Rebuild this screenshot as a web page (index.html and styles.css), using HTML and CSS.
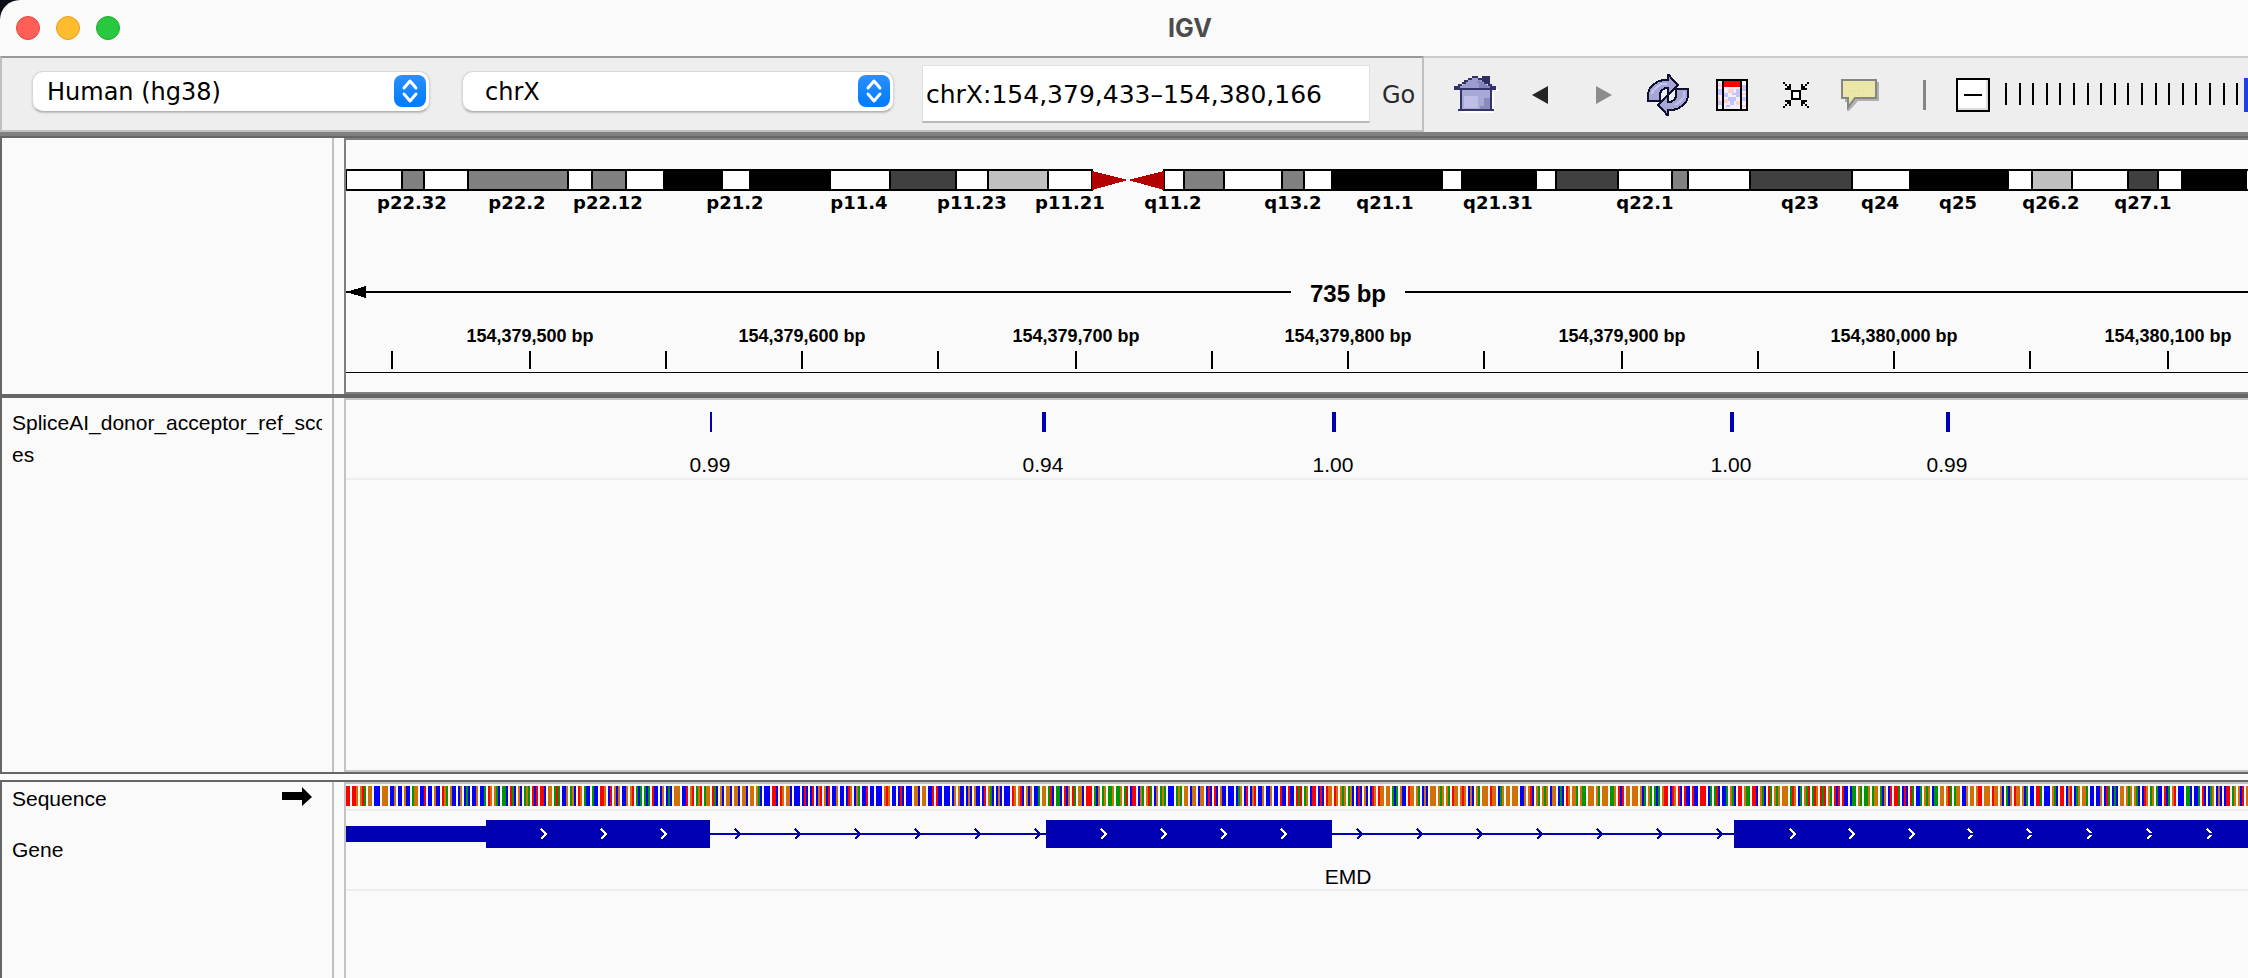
FILE: index.html
```html
<!DOCTYPE html>
<html lang="en">
<head>
<meta charset="utf-8">
<title>IGV</title>
<link rel="stylesheet" href="styles.css">
</head>
<body>
<div class="window">
  <header class="titlebar">
    <div class="lights">
      <button class="light light-close" aria-label="Close"></button>
      <button class="light light-min" aria-label="Minimize"></button>
      <button class="light light-max" aria-label="Zoom"></button>
    </div>
    <h1 class="title">IGV</h1>
  </header>

  <div class="toolbar">
    <form class="locus-bar">
      <div class="picker picker-genome">
        <select class="picker-select" aria-label="Genome"><option>Human (hg38)</option></select>
        <svg class="picker-knob" width="32" height="32" viewBox="0 0 32 32" aria-hidden="true"><path d="M10 13l6-7 6 7M10 19l6 7 6-7"/></svg>
      </div>
      <div class="picker picker-chrom">
        <select class="picker-select" aria-label="Chromosome"><option>chrX</option></select>
        <svg class="picker-knob" width="32" height="32" viewBox="0 0 32 32" aria-hidden="true"><path d="M10 13l6-7 6 7M10 19l6 7 6-7"/></svg>
      </div>
      <input class="locus" type="text" aria-label="Locus" value="chrX:154,379,433–154,380,166">
      <button class="go" type="button">Go</button>
    </form>
    <div class="tools">
      <button class="tool" aria-label="Home">
        <svg width="44" height="38" viewBox="0 0 44 38" shape-rendering="crispEdges">
          <path fill="#fff" d="M6 35h34v2H6zM40 13h4v2h-4zM38 16h2v19h-2z"/>
          <path fill="#9c9cce" d="M18 2h6l4 2 4 4 4 2 6 4H2l4-4 4-2 4-4z"/>
          <path fill="#8484b8" d="M24 4l6 4 6 3 4 3H26z"/>
          <path fill="#2e2e63" d="M28 0h8v10h-2V8h-4V6h-2z"/>
          <path fill="none" stroke="#33336b" stroke-width="2" d="M0 11h6M4 9h4M8 7h4M10 5h4M14 3h4M18 1h6M24 3h4M28 5h2M30 7h4M34 9h4M36 11h6"/>
          <path fill="#a9a9d8" d="M8 14h28v20H8z"/>
          <path fill="#bebee6" d="M10 20h14v12H10z"/>
          <path fill="#8a8abc" d="M30 22h6v12H26v-4h4z"/>
          <path fill="#33336b" d="M0 12h42v2H0zM6 14h2v20H6zM36 14h2v20h-2zM4 33h36v2H4z"/>
        </svg>
      </button>
      <button class="tool" aria-label="Back"><svg width="16" height="18" viewBox="0 0 16 18"><path fill="#252525" d="M16 0v18L0 9z"/></svg></button>
      <button class="tool" aria-label="Forward"><svg width="16" height="18" viewBox="0 0 16 18"><path fill="#8c8c8c" d="M0 0v18l16-9z"/></svg></button>
      <button class="tool" aria-label="Refresh">
        <svg width="42" height="42" viewBox="0 0 42 42" shape-rendering="crispEdges">
          <path fill="#a5a5d6" stroke="#101030" stroke-width="2" d="M1 27V19l2-5 4-4 5-3 5-1h4V1h1l3 4 3 3 3 3-9 9h-1v-6h-3l-4 3-1 3v7z"/>
          <path fill="#c4c4ea" d="M4 18l4-5 6-4h6v2h-5l-6 4-3 5H4z"/>
          <path fill="#a5a5d6" stroke="#101030" stroke-width="2" d="M41 15v8l-2 5-4 4-5 3-5 1h-4v5h-1l-3-4-3-3-3-3 9-9h1v6h3l4-3 1-3v-7z"/>
          <path fill="#bcbce4" d="M36 17h2v6l-3 5-5 3h-4l6-4 4-5z"/>
        </svg>
      </button>
      <button class="tool" aria-label="Define region">
        <svg width="32" height="32" viewBox="0 0 32 32" shape-rendering="crispEdges">
          <path fill="#f4f0fb" d="M0 0h32v32H0z"/>
          <path fill="#c3c3ff" d="M2 10h4v6H2zM2 22h4v4H2zM8 14h4v4H8zM12 18h8v4h-8zM20 10h4v8h-4zM14 22h4v4h-4zM10 26h4v2h-4zM26 6h4v6h-4zM26 18h4v4h-4zM16 14h6v2h-6z"/>
          <path fill="#ffcfcf" d="M2 4h4v4H2zM12 10h6v4h-6zM8 20h4v4H8zM20 22h4v4h-4zM26 14h4v2h-4zM2 18h2v4H2zM26 26h4v2h-4z"/>
          <path fill="#f00" d="M8 2h16v6H8z"/>
          <path fill="none" stroke="#000" stroke-width="2" d="M1 1h30v30H1zM7 1v30M25 1v30"/>
        </svg>
      </button>
      <button class="tool" aria-label="Fit data to window">
        <svg width="26" height="26" viewBox="0 0 26 26" shape-rendering="crispEdges">
          <path fill="#fff" stroke="#000" stroke-width="2" d="M9 9h8v8H9z"/>
          <path id="corner" d="M0 0h2v2H0zM2 2h2v2H2zM4 4h4v2H4zM6 2h2v2H6zM2 6h6v2H2z"/>
          <path d="M26 0h-2v2h2zM24 2h-2v2h2zM22 4h-4v2h4zM20 2h-2v2h2zM24 6h-6v2h6z"/>
          <path d="M0 26h2v-2H0zM2 24h2v-2H2zM4 22h4v-2H4zM6 24h2v-2H6zM2 20h6v-2H2z"/>
          <path d="M26 26h-2v-2h2zM24 24h-2v-2h2zM22 22h-4v-2h4zM20 24h-2v-2h2zM24 20h-6v-2h6z"/>
        </svg>
      </button>
      <button class="tool" aria-label="Show popup text">
        <svg width="38" height="32" viewBox="0 0 38 32">
          <path fill="#b0b0b0" d="M4 3h34v19H17l-9 10H6v-9H4z"/>
          <path fill="#ebe7a9" stroke="#858585" stroke-width="2" d="M1 1h34v18H14l-7 9v-9H1z"/>
          <path stroke="#d9d9b8" stroke-width="1" stroke-dasharray="2 3" d="M7 12h20"/>
        </svg>
      </button>
      <span class="divider"></span>
      <button class="zoom-out" aria-label="Zoom out"></button>
      <svg class="zoom-scale" id="zoom-scale" height="34" aria-hidden="true"></svg>
    </div>
  </div>

  <main class="panels">
    <section class="panel panel-header">
      <div class="names"></div>
      <div class="tracks"><svg id="ruler" class="canvas canvas-ruler"></svg></div>
    </section>
    <section class="panel panel-data">
      <div class="names"><p class="name name-wrap">SpliceAI_donor_acceptor_ref_sco<br>es</p></div>
      <div class="tracks"><svg id="splice" class="canvas canvas-splice"></svg></div>
    </section>
    <section class="panel panel-feature">
      <div class="names">
        <div class="name name-sequence">Sequence
          <svg width="30" height="20" viewBox="0 0 30 20" aria-hidden="true"><path d="M0 5h20V0l10 10-10 9v-6H0z"/></svg>
        </div>
        <p class="name name-gene">Gene</p>
      </div>
      <div class="tracks">
        <svg id="sequence" class="canvas canvas-sequence"></svg>
        <svg id="gene" class="canvas canvas-gene"></svg>
      </div>
    </section>
  </main>
</div>
<script src="tracks.js"></script>
</body>
</html>
```

FILE: styles.css
```css
* { box-sizing: border-box; }

body {
  margin: 0;
  background: #0c0e18;
  font-family: "Liberation Sans", Arial, sans-serif;
  color: #000;
}

.window {
  display: flex;
  flex-direction: column;
  min-height: 100vh;
  overflow: hidden;
  background: #fafafa;
  border-top-left-radius: 20px;
}

button {
  margin: 0;
  padding: 0;
  border: 0;
  background: none;
}

/* Title bar */
.titlebar {
  display: flex;
  align-items: center;
  height: 56px;
  padding-left: 16px;
}
.lights { display: flex; gap: 16px; }
.light {
  width: 24px;
  height: 24px;
  border: 1px solid;
  border-radius: 50%;
}
.light-close { background: #ff5f57; border-color: #e2463f; }
.light-min { background: #febc2e; border-color: #e0a028; }
.light-max { background: #28c840; border-color: #1dab2f; }
.title {
  margin: 0 0 0 1048px;
  font: bold 25px/32px Inter, sans-serif;
  color: #4b4b4b;
}

/* Toolbar */
.toolbar {
  display: flex;
  height: 80px;
  background: #eee;
  border-bottom: 4px solid #808080;
}
.locus-bar {
  display: flex;
  flex: none;
  align-items: flex-start;
  width: 1424px;
  padding: 7px 0 0 30px;
  border: 2px solid #c0c0c0;
  border-top-color: #999;
}
.picker {
  position: relative;
  height: 41px;
  margin-top: 6px;
}
.picker-genome { width: 398px; margin-right: 32px; }
.picker-chrom { width: 432px; margin-right: 28px; }
.picker-select {
  width: 100%;
  height: 100%;
  padding: 1px 40px 0 14px;
  appearance: none;
  border: 1px solid #d8d8d8;
  border-bottom-color: #b4b4b4;
  border-radius: 11px;
  background: #fff;
  box-shadow: 0 1px 2px #0003;
  color: #000;
  font: 24px/38px "DejaVu Sans", sans-serif;
}
.picker-chrom .picker-select { padding-left: 22px; }
.picker-knob {
  position: absolute;
  top: 4px;
  right: 4px;
  border-radius: 8px;
  background: linear-gradient(#2a90ff, #007aff);
  pointer-events: none;
}
.picker-knob path {
  fill: none;
  stroke: #fff;
  stroke-width: 3;
  stroke-linecap: round;
  stroke-linejoin: round;
}
.locus {
  width: 448px;
  height: 58px;
  padding: 2px 3px 0;
  border: 1px solid #e0e0e0;
  border-bottom: 2px solid #b8b8b8;
  background: #fff;
  color: #000;
  font: 25px/40px "DejaVu Sans", sans-serif;
}
.go {
  margin: 12px 0 0 12px;
  color: #2a2a2a;
  font: 24px/36px "DejaVu Sans", sans-serif;
}
.tools {
  display: flex;
  flex: 1;
  align-items: center;
  min-width: 0;
  padding-left: 20px;
  overflow: hidden;
  border-top: 2px solid #ccc;
}
.tool {
  display: flex;
  flex: none;
  align-items: center;
  justify-content: center;
  width: 64px;
  height: 48px;
}
.divider {
  flex: none;
  width: 3px;
  height: 30px;
  margin: 0 30px 0 31px;
  background: #858585;
}
.zoom-out {
  display: flex;
  flex: none;
  align-items: center;
  justify-content: center;
  width: 34px;
  height: 34px;
  border: 2px solid #000;
  background: #fff;
  box-shadow: inset -2px -2px #ddd;
}
.zoom-out::before {
  content: "";
  width: 18px;
  height: 2px;
  background: #000;
}
.zoom-scale {
  flex: 1;
  min-width: 0;
  margin-left: 15px;
}

/* Panels */
.panels {
  display: flex;
  flex: 1;
  flex-direction: column;
  border-top: 2px solid #666;
}
.panel {
  display: grid;
  grid-template-columns: 332px minmax(0, 1fr);
  column-gap: 10px;
  border-left: 2px solid #666;
}
.names {
  border-right: 2px solid #c0c0c0;
}
.tracks {
  border: 2px solid #c4c4c4;
  border-right: 0;
  overflow: hidden;
}
.panel-header .tracks { border-color: #808080; }
.panel-header { height: 256px; }
.panel-data {
  height: 380px;
  border-top: 4px solid #666;
  border-bottom: 2px solid #666;
}
.panel-feature {
  flex: 1;
  margin-top: 6px;
  border-top: 2px solid #666;
}
.panel-feature .tracks { border-bottom: 0; }

.name {
  margin: 0;
  padding: 0 10px;
  font-size: 21px;
  line-height: 32px;
}
.name-wrap {
  width: 320px;
  height: 80px;
  padding: 9px 0 0 10px;
  overflow: hidden;
  white-space: nowrap;
}
.name-sequence {
  display: flex;
  justify-content: space-between;
  height: 52px;
  padding: 1px 20px 0 10px;
}
.name-sequence svg { margin-top: 4px; }

.canvas {
  display: block;
  width: 100%;
  shape-rendering: crispEdges;
}
.canvas-ruler { height: 252px; }
.canvas-splice { height: 80px; border-bottom: 2px solid #eee; }
.canvas-sequence { height: 27px; border-bottom: 2px solid #eee; }
.canvas-gene { height: 80px; border-bottom: 2px solid #eee; }

.canvas text { text-anchor: middle; }
.band-label { font: bold 18px "DejaVu Sans", sans-serif; }
.span-label { font: bold 24px "Liberation Sans", Arial, sans-serif; }
.tick-label { font: bold 18px "Liberation Sans", Arial, sans-serif; }
.feature-label { font: 21px "Liberation Sans", Arial, sans-serif; }
```

FILE: tracks.js
```js
const NS = 'http://www.w3.org/2000/svg';
const BLUE = '#0000b2';

// Left edge of the track area; feature positions are given in window pixels.
const ORIGIN = 346;

function add(svg, tag, attrs, text) {
  const el = document.createElementNS(NS, tag);
  for (const key in attrs) el.setAttribute(key, attrs[key]);
  if (text) el.textContent = text;
  svg.appendChild(el);
}
function rect(svg, x, y, width, height, fill) {
  add(svg, 'rect', { x, y, width, height, fill });
}
function label(svg, x, y, text, cls) {
  add(svg, 'text', { x: x - ORIGIN, y, class: cls }, text);
}

// Zoom slider
const scale = document.getElementById('zoom-scale');
for (let i = 0; i < 18; i++) rect(scale, Math.round(i * 13.6), 5, 2, 22, '#000');
rect(scale, 239, 0, 14, 34, '#1f3fe0');

// Ideogram
const ruler = document.getElementById('ruler');
const W = '#fff', G1 = '#c0c0c0', G2 = '#808080', G3 = '#404040', K = '#000';
const arms = [
  [[346, W], [402, G2], [424, W], [468, G2], [568, W], [592, G2], [626, W], [664, K], [722, W],
   [750, K], [830, W], [890, G3], [956, W], [988, G1], [1048, W], [1092]],
  [[1164, W], [1184, G2], [1224, W], [1282, G2], [1304, W], [1332, K], [1442, W], [1462, K],
   [1536, W], [1556, G3], [1618, W], [1672, G2], [1688, W], [1750, G3], [1852, W], [1910, K],
   [2008, W], [2032, G1], [2072, W], [2128, G3], [2158, W], [2182, K], [2246, W], [2300]]
];
for (const arm of arms) {
  for (let i = 0; i < arm.length - 1; i++) {
    const x = arm[i][0] - ORIGIN;
    add(ruler, 'rect', {
      x, y: 30, width: arm[i + 1][0] - arm[i][0], height: 20,
      fill: arm[i][1], stroke: '#000', 'stroke-width': 2
    });
  }
}
add(ruler, 'path', { d: 'M746 31l36 9-36 10zM818 31l-36 9 36 10z', fill: '#b20000' });

[[412, 'p22.32'], [517, 'p22.2'], [608, 'p22.12'], [735, 'p21.2'], [859, 'p11.4'],
 [972, 'p11.23'], [1070, 'p11.21'], [1173, 'q11.2'], [1293, 'q13.2'], [1385, 'q21.1'],
 [1498, 'q21.31'], [1645, 'q22.1'], [1800, 'q23'], [1880, 'q24'], [1958, 'q25'],
 [2051, 'q26.2'], [2143, 'q27.1']
].forEach(([x, name]) => label(ruler, x, 69, name, 'band-label'));

// Ruler
rect(ruler, 0, 151, 945, 2, '#000');
rect(ruler, 1059, 151, 4000, 2, '#000');
add(ruler, 'path', { d: 'M0 152l20-6v12z' });
label(ruler, 1348, 162, '735 bp', 'span-label');
[392, 530, 666, 802, 938, 1076, 1212, 1348, 1484, 1622, 1758, 1894, 2030, 2168]
  .forEach(x => rect(ruler, x - ORIGIN - 1, 211, 2, 18, '#000'));
[[530, '154,379,500 bp'], [802, '154,379,600 bp'], [1076, '154,379,700 bp'],
 [1348, '154,379,800 bp'], [1622, '154,379,900 bp'], [1894, '154,380,000 bp'],
 [2168, '154,380,100 bp']].forEach(([x, t]) => label(ruler, x, 202, t, 'tick-label'));
rect(ruler, 0, 232, 5000, 1, '#000');

// Splice site scores
const splice = document.getElementById('splice');
[[711, '0.99', 2], [1044, '0.94', 4], [1334, '1.00', 4], [1732, '1.00', 4], [1948, '0.99', 4]]
  .forEach(([x, score, w]) => {
    rect(splice, x - ORIGIN - w / 2, 12, w, 20, BLUE);
    label(splice, x - 1, 72, score, 'feature-label');
  });

// Reference sequence
const bases = `TTTTGGTAGGCCCGGGCCGCCGCCAGGCCTCCGCCTGAGCCCGCACCCGCC
  ATGGACAACTACGCAGATCTTTCGGATACCGAGCTGACCACCTTGCTGCGCCGGTACAACATCCCGCACGGGCCTGTAGTAG
  GTACGCGGCGGCGGCGGGACCCCTTCTGGGCCCCCTCCTCGTGCTCCGCCCTGCGACCTCCCCCGTGCCCTCCCCG
  GCGGCCTTCCCCCCGGCCCGCGCCCTGACCGCCCCTGGTCGCGCCAG
  GATCAACTCGTAGGCTTTACGAGAAGAAGATCTTCGAGTACGAGACCCAGAGGCGGCGGCTCTCGCCCCCCAGCTCGTCCGCCGCCTCCTCCTATAGCTTCTCTG
  GTGGAGAGCCTCGCCTGTGGGGACAGCCTGGGACGCGGGGAGGATGGGTGCGCGAGGGTGGCAGGGGGGCCGGTCGAG
  AGCGGCACTGGGAGAAGGGGAGGGAAGTCTGGGGGGCAGAACAGTTCTGTCTCCTCCTTTCAATCCCAG
  ACTTGAATTCGACTAGAGGGGATGCAGATATGTATGATCTTCCCAAGAAAGAGGACGCTTTACTCTACCAGAGCAAGG
  GTAAGGCCGGGGTTGGGTGGGCACGTGGGCACCTTACCCGACTTCGTCAGGGACCCCGCTACACGGGAGGACCTGAGACCTCAGTCCCAACCCATCCAGCGCCTTAGGCTGACCTGA`
  .replace(/\s+/g, '');
const BASE_COLORS = { A: '#009600', C: '#0000ff', G: '#d17105', T: '#ff0000' };
const sequence = document.getElementById('sequence');
[...bases].forEach((base, i) => {
  rect(sequence, 2 * Math.floor(i * 1.3646 + 0.36), 2, 2, 20, BASE_COLORS[base]);
});

// Gene model
const gene = document.getElementById('gene');
rect(gene, 0, 22, 1400, 2, BLUE);
rect(gene, 0, 15, 140, 16, BLUE);
[[486, 710], [1046, 1332], [1734, 3000]]
  .forEach(([a, b]) => rect(gene, a - ORIGIN, 9, b - a, 28, BLUE));
function chevron(x, color) {
  add(gene, 'path', {
    d: `M${x - ORIGIN} 18l5 5-5 5`, fill: 'none', stroke: color, 'stroke-width': 2
  });
}
[541, 601, 661, 1101, 1161, 1221, 1281, 1790, 1849, 1909, 1968, 2027, 2087, 2147, 2207]
  .forEach(x => chevron(x, '#fff'));
[735, 795, 855, 915, 975, 1035, 1357, 1417, 1477, 1537, 1597, 1657, 1717]
  .forEach(x => chevron(x, BLUE));
rect(gene, 1621, 22, 1500, 2, BLUE);
label(gene, 1348, 73, 'EMD', 'feature-label');
```
